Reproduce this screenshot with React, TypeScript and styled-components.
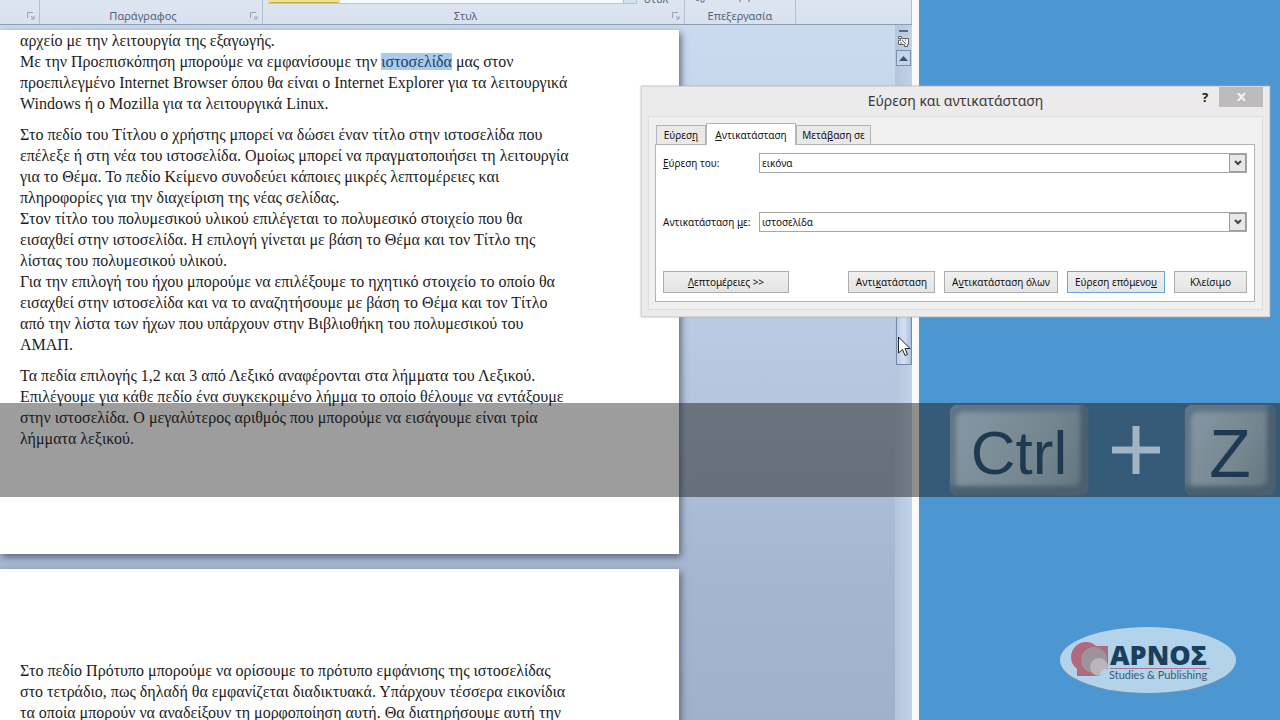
import React from 'react';
import styled, { createGlobalStyle, css } from 'styled-components';

const GlobalStyle = createGlobalStyle`
  * { box-sizing: border-box; }
  body { margin: 0; background: #4c96d2; }
`;

const ui = css`font-family: "Noto Sans", "Open Sans", sans-serif;`;

const Desktop = styled.div`
  position: relative;
  display: grid;
  grid-template-columns: minmax(0, 1fr) 361px;
  height: 100vh;
  overflow: hidden;
  background: #4c96d2;
`;

const WordWindow = styled.main`
  display: flex;
  flex-direction: column;
  min-height: 0;
  border-right: 7px solid #fafafc;
`;

const Ribbon = styled.header`
  ${ui}
  position: relative;
  display: flex;
  height: 25px;
  flex: none;
  background: linear-gradient(#dde5f1, #d8e1ee);
  border-bottom: 1px solid #8f9db1;
  font-size: 11px;
  line-height: 16px;
  color: #56627a;
`;

const Group = styled.section<{ $width?: number }>`
  display: flex;
  align-items: flex-end;
  justify-content: space-between;
  ${p => (p.$width ? `width: ${p.$width}px;` : 'flex: 1;')}
  min-width: 0;
  border-right: 1px solid #b3bfd0;
  overflow: hidden;
`;

const GroupName = styled.span`
  flex: 1;
  text-align: center;
`;

const LauncherButton = styled.button`
  width: 16px;
  height: 16px;
  padding: 4px 3px;
  border: 0;
  background: none;
  line-height: 0;
`;

const StyleGallery = styled.div`
  position: absolute;
  top: 0;
  left: 268px;
  width: 369px;
  height: 4px;
  display: flex;
  justify-content: space-between;
  background: #f5f8fc;
  border-bottom: 1px solid #b8c6d8;
`;

const SelectedStyle = styled.div`
  width: 72px;
  height: 3px;
  background: #f3e28c;
  border-bottom: 1px solid #c3aa50;
  border-radius: 0 0 3px 3px;
`;

const GalleryArrow = styled.div`
  width: 14px;
  height: 4px;
  background: #d3e1f0;
  border: 1px solid #b0c3d8;
  border-top: 0;
`;

const CutLabel = styled.span`
  position: absolute;
  top: -9px;
  left: 644px;
  line-height: 16px;
`;

const CutIcon = styled.svg`
  position: absolute;
  top: 0;
  left: 695px;
`;

const Workspace = styled.div`
  flex: 1;
  min-height: 0;
  display: grid;
  grid-template-columns: minmax(0, 1fr) 17px;
  background: linear-gradient(#cadbf0, #b9cae1 45%, #a4b6d0 80%, #9fb2cc);
`;

const Pages = styled.div`
  display: flex;
  flex-direction: column;
  gap: 15px;
  min-height: 0;
  overflow: hidden;
  padding: 5px 216px 0 0;
`;

const Page = styled.article<{ $height: number; $top: number }>`
  flex: none;
  height: ${p => p.$height}px;
  padding: ${p => p.$top}px 0 0 20px;
  background: #fff;
  box-shadow: 2px 3px 7px #5c6478;
  font-family: "Liberation Serif", serif;
  font-size: 16px;
  line-height: 21px;
  white-space: nowrap;
  color: #1c1c1c;
`;

const Paragraph = styled.p<{ $spaced?: boolean }>`
  margin: 0 0 ${p => (p.$spaced ? 10 : 0)}px;
`;

const Selection = styled.mark`
  background: #a9cbee;
  color: #24415f;
`;

const ScrollBar = styled.div`
  display: flex;
  flex-direction: column;
  align-items: center;
  padding-top: 5px;
  gap: 2px;
  background: linear-gradient(90deg, #b4c6dd, #c3d3e6);
`;

const SplitHandle = styled.div`
  width: 9px;
  height: 2px;
  background: #566b88;
`;

const BarButton = styled.button<{ $framed?: boolean }>`
  display: grid;
  place-items: center;
  width: 15px;
  height: ${p => (p.$framed ? 16 : 14)}px;
  padding: 0;
  border: ${p => (p.$framed ? '1px solid #7c90ad' : '0')};
  background: ${p => (p.$framed ? '#c3d3e9' : 'none')};
`;

const Thumb = styled.div`
  width: 16px;
  height: 257px;
  margin-top: 40px;
  border: 1px solid #7289aa;
  background: linear-gradient(90deg, #bccfe7, #d3e0f1 50%, #aac0dd);
`;

const Dialog = styled.section`
  ${ui}
  position: absolute;
  top: 86px;
  right: 10px;
  width: 629px;
  padding: 0 6px 6px;
  background: #ebebeb;
  border: 1px solid #d5d5d5;
  box-shadow: 0 0 2px #aaa;
  font-size: 10px;
  line-height: 16px;
  color: #111;
`;

const TitleBar = styled.header`
  position: relative;
  display: flex;
  justify-content: center;
  height: 29px;
`;

const Title = styled.h1`
  margin: 4px 0 0;
  font-size: 14px;
  font-weight: 400;
  line-height: 20px;
  color: #3a3a3a;
`;

const WindowButtons = styled.div`
  position: absolute;
  top: 0;
  right: 0;
  display: flex;
`;

const WindowButton = styled.button<{ $close?: boolean }>`
  ${ui}
  display: grid;
  place-items: center;
  width: ${p => (p.$close ? 44 : 28)}px;
  height: 20px;
  padding: 0;
  border: 0;
  background: ${p => (p.$close ? '#bcbcbc' : 'none')};
  font-size: 13px;
  font-weight: 700;
  color: #222;
`;

const Body = styled.div`
  padding: 6px 7px 7px 6px;
  background: #f0f0f0;
  border: 1px solid #dedede;
`;

const Tabs = styled.nav`
  display: flex;
  align-items: flex-end;
  padding-left: 1px;
`;

const Tab = styled.button<{ $active?: boolean; $width: number }>`
  ${ui}
  width: ${p => p.$width}px;
  height: ${p => (p.$active ? 22 : 19)}px;
  margin-bottom: ${p => (p.$active ? -1 : 0)}px;
  padding: 0;
  border: 1px solid #b4b4b4;
  border-bottom: 0;
  background: ${p => (p.$active ? '#fff' : '#e9e9e9')};
  font-size: 10px;
  line-height: 16px;
  white-space: nowrap;
  color: #111;
`;

const Panel = styled.form`
  display: flex;
  flex-direction: column;
  padding: 8px 7px;
  background: #fff;
  border: 1px solid #b4b4b4;
`;

const Field = styled.div`
  display: grid;
  grid-template-columns: 96px minmax(0, 1fr);
  align-items: center;
  margin-bottom: 39px;
  white-space: nowrap;
`;

const Combo = styled.div`
  display: flex;
  height: 20px;
  border: 1px solid #a6a6a6;
`;

const ComboInput = styled.input`
  ${ui}
  flex: 1;
  min-width: 0;
  padding: 0 2px;
  border: 0;
  font-size: 10px;
  color: #111;
`;

const ComboButton = styled.button`
  display: grid;
  place-items: center;
  width: 17px;
  padding: 0;
  border: 1px solid #9c9c9c;
  background: #e8e8e8;
`;

const Actions = styled.div`
  display: flex;
  gap: 9px;
`;

const Action = styled.button<{ $width: number; $primary?: boolean; $first?: boolean }>`
  ${ui}
  width: ${p => p.$width}px;
  height: 22px;
  margin-right: ${p => (p.$first ? 'auto' : '0')};
  padding: 0;
  border: 1px solid ${p => (p.$primary ? '#6aa5dc' : '#adadad')};
  background: linear-gradient(#f0f0f0, #e4e4e4);
  font-size: 10px;
  line-height: 16px;
  white-space: nowrap;
  color: #111;
`;

const KeyBand = styled.aside`
  position: absolute;
  top: 403px;
  left: 0;
  right: 0;
  display: flex;
  justify-content: flex-end;
  align-items: center;
  height: 94px;
  padding-right: 5px;
  background: linear-gradient(90deg, rgba(22, 22, 22, 0.42) 53%, rgba(28, 26, 22, 0.48) 54%);
  font-family: "Liberation Sans", sans-serif;
`;

const Key = styled.kbd<{ $width: number; $size: number }>`
  width: ${p => p.$width}px;
  height: 90px;
  border-radius: 8px;
  background: linear-gradient(115deg, #8799a6, #75868f 60%, #61747f);
  box-shadow:
    inset -8px -9px 4px #4b606f,
    inset 6px 7px 4px #5f7688,
    0 0 3px #4c6170;
  font-family: inherit;
  font-size: ${p => p.$size}px;
  line-height: 96px;
  text-align: center;
  color: #1d3a50;
`;

const Plus = styled.svg`
  margin: 0 25px 0 24px;
`;

const Logo = styled.svg`
  position: absolute;
  right: 43px;
  bottom: 25px;
`;

const Cursor = styled.svg`
  position: absolute;
  top: 336px;
  left: calc(100% - 383px);
`;

function DialogLauncher({ label }: { label: string }) {
  return (
    <LauncherButton aria-label={label}>
      <svg width="8" height="8" viewBox="0 0 8 8" fill="none" stroke="#98a4b6">
        <path d="M.5 6V.5H6M4 4l3 3M7 4v3H4" />
      </svg>
    </LauncherButton>
  );
}

function ComboBox({ id, value }: { id: string; value: string }) {
  return (
    <Combo>
      <ComboInput id={id} defaultValue={value} />
      <ComboButton type="button" aria-label="Λίστα">
        <svg width="8" height="6" viewBox="0 0 8 6" fill="none" stroke="#444" strokeWidth="2">
          <path d="M1 1l3 3 3-3" />
        </svg>
      </ComboButton>
    </Combo>
  );
}

export default function App() {
  return (
    <Desktop>
      <GlobalStyle />
      <WordWindow>
        <Ribbon>
          <Group $width={40}><GroupName /><DialogLauncher label="Γραμματοσειρά" /></Group>
          <Group $width={223}><GroupName>Παράγραφος</GroupName><DialogLauncher label="Παράγραφος" /></Group>
          <Group><GroupName>Στυλ</GroupName><DialogLauncher label="Στυλ" /></Group>
          <Group $width={111}><GroupName>Επεξεργασία</GroupName></Group>
          <Group $width={116} />
          <StyleGallery><SelectedStyle /><GalleryArrow /></StyleGallery>
          <CutLabel>στυλ</CutLabel>
          <CutIcon width="60" height="4" viewBox="0 0 60 4" fill="none" stroke="#6b7589">
            <path d="M1 0l3 1M6 0v2h3V0M45 0v2M54 0v2" />
          </CutIcon>
        </Ribbon>
        <Workspace>
          <Pages>
            <Page $height={524} $top={0}>
              <Paragraph $spaced>
                αρχείο με την λειτουργία της εξαγωγής.<br />
                Με την Προεπισκόπηση μπορούμε να εμφανίσουμε την <Selection>ιστοσελίδα</Selection> μας στον<br />
                προεπιλεγμένο Internet Browser όπου θα είναι ο Internet Explorer για τα λειτουργικά<br />
                Windows ή ο Mozilla για τα λειτουργικά Linux.
              </Paragraph>
              <Paragraph>
                Στο πεδίο του Τίτλου ο χρήστης μπορεί να δώσει έναν τίτλο στην ιστοσελίδα που<br />
                επέλεξε ή στη νέα του ιστοσελίδα. Ομοίως μπορεί να πραγματοποιήσει τη λειτουργία<br />
                για το Θέμα. Το πεδίο Κείμενο συνοδεύει κάποιες μικρές λεπτομέρειες και<br />
                πληροφορίες για την διαχείριση της νέας σελίδας.
              </Paragraph>
              <Paragraph>
                Στον τίτλο του πολυμεσικού υλικού επιλέγεται το πολυμεσικό στοιχείο που θα<br />
                εισαχθεί στην ιστοσελίδα. Η επιλογή γίνεται με βάση το Θέμα και τον Τίτλο της<br />
                λίστας του πολυμεσικού υλικού.
              </Paragraph>
              <Paragraph $spaced>
                Για την επιλογή του ήχου μπορούμε να επιλέξουμε το ηχητικό στοιχείο το οποίο θα<br />
                εισαχθεί στην ιστοσελίδα και να το αναζητήσουμε με βάση το Θέμα και τον Τίτλο<br />
                από την λίστα των ήχων που υπάρχουν στην Βιβλιοθήκη του πολυμεσικού του<br />
                ΑΜΑΠ.
              </Paragraph>
              <Paragraph>
                Τα πεδία επιλογής 1,2 και 3 από Λεξικό αναφέρονται στα λήμματα του Λεξικού.<br />
                Επιλέγουμε για κάθε πεδίο ένα συγκεκριμένο λήμμα το οποίο θέλουμε να εντάξουμε<br />
                στην ιστοσελίδα. Ο μεγαλύτερος αριθμός που μπορούμε να εισάγουμε είναι τρία<br />
                λήμματα λεξικού.
              </Paragraph>
            </Page>
            <Page $height={620} $top={91}>
              <Paragraph>
                Στο πεδίο Πρότυπο μπορούμε να ορίσουμε το πρότυπο εμφάνισης της ιστοσελίδας<br />
                στο τετράδιο, πως δηλαδή θα εμφανίζεται διαδικτυακά. Υπάρχουν τέσσερα εικονίδια<br />
                τα οποία μπορούν να αναδείξουν τη μορφοποίηση αυτή. Θα διατηρήσουμε αυτή την
              </Paragraph>
            </Page>
          </Pages>
          <ScrollBar>
            <SplitHandle />
            <BarButton aria-label="Χάρακας">
              <svg width="13" height="13" viewBox="0 0 13 13" fill="#f4f4f0" stroke="#61656b">
                <path d="M1.500 1.500h3v2h7v6h-1v2h-3v-2h-6v-4h2v-2h-2zM5 5l4 4M3 8h2M8 5h1" />
              </svg>
            </BarButton>
            <BarButton $framed aria-label="Κύλιση επάνω">
              <svg width="9" height="5" viewBox="0 0 9 5" fill="#3f5370"><path d="M0 5l4.500-5L9 5z" /></svg>
            </BarButton>
            <Thumb />
          </ScrollBar>
        </Workspace>
      </WordWindow>

      <Dialog role="dialog" aria-labelledby="dialog-title">
        <TitleBar>
          <Title id="dialog-title">Εύρεση και αντικατάσταση</Title>
          <WindowButtons>
            <WindowButton>?</WindowButton>
            <WindowButton $close aria-label="Κλείσιμο παραθύρου">
              <svg width="9" height="8" viewBox="0 0 9 8" stroke="#f4f4f4" strokeWidth="2"><path d="M1 0l7 8M8 0L1 8" /></svg>
            </WindowButton>
          </WindowButtons>
        </TitleBar>
        <Body>
          <Tabs>
            <Tab $width={50}>Εύρεσ<u>η</u></Tab>
            <Tab $width={90} $active><u>Α</u>ντικατάσταση</Tab>
            <Tab $width={75}>Μετά<u>β</u>αση σε</Tab>
          </Tabs>
          <Panel>
            <Field>
              <label htmlFor="find"><u>Ε</u>ύρεση του:</label>
              <ComboBox id="find" value="εικόνα" />
            </Field>
            <Field>
              <label htmlFor="replace">Αντικατάσταση <u>μ</u>ε:</label>
              <ComboBox id="replace" value="ιστοσελίδα" />
            </Field>
            <Actions>
              <Action type="button" $width={126} $first><u>Λ</u>επτομέρειες &gt;&gt;</Action>
              <Action type="button" $width={87}>Αντι<u>κ</u>ατάσταση</Action>
              <Action type="button" $width={114}>Α<u>ν</u>τικατάσταση όλων</Action>
              <Action type="button" $width={98} $primary>Εύρεση επόμενο<u>υ</u></Action>
              <Action type="button" $width={73}>Κλείσιμο</Action>
            </Actions>
          </Panel>
        </Body>
      </Dialog>

      <KeyBand>
        <Key $width={138} $size={62}>Ctrl</Key>
        <Plus width="48" height="48" viewBox="0 0 48 48" stroke="#a0b4c3" strokeWidth="7"><path d="M24 0v48M0 24h48" /></Plus>
        <Key $width={90} $size={68}>Z</Key>
      </KeyBand>

      <Cursor width="14" height="22" viewBox="0 0 14 22" fill="#fff" stroke="#222" strokeLinejoin="round">
        <path d="M1.500 1v16l4-3.500 2.500 6 2.500-1-2.500-6h5z" />
      </Cursor>

      <Logo width="178" height="70" viewBox="0 0 178 70">
        <ellipse cx="89" cy="36" rx="88" ry="33" fill="#6f93ac" />
        <ellipse cx="89" cy="35" rx="88" ry="33" fill="#b3d3eb" />
        <circle cx="27" cy="32" r="15" fill="#b0697d" />
        <path d="M27 21h22v30H18V34z" fill="#b0697d" />
        <circle cx="35" cy="35" r="13" fill="#9d939c" />
        <circle cx="40" cy="42" r="9" fill="#bdb5b9" />
        <circle cx="47" cy="50" r="6" fill="#b3d3eb" />
        <path d="M51 43.500h100" stroke="#a5788f" />
        <text x="51" y="40" fontFamily="Open Sans, sans-serif" fontWeight="800" fontSize="27" fill="#1a3f5d">ΑΡΝΟΣ</text>
        <text x="50" y="54" fontFamily="Lato, sans-serif" fontSize="11" fill="#3d5a73">Studies &amp; Publishing</text>
      </Logo>
    </Desktop>
  );
}
